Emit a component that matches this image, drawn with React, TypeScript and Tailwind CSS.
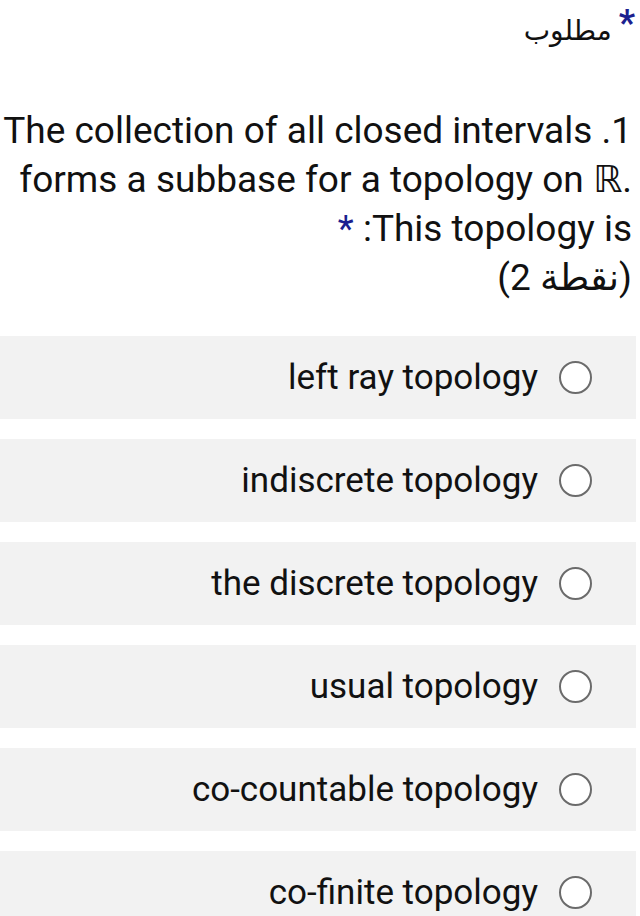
import { Fragment } from "react";

const options = [
  "left ray topology",
  "indiscrete topology",
  "the discrete topology",
  "usual topology",
  "co-countable topology",
  "co-finite topology",
];

function Radio() {
  return (
    <span className="block h-[33px] w-[33px] shrink-0 rounded-full border-2 border-[#6b6b6b] bg-white" />
  );
}

export default function App() {
  return (
    <div
      className="h-[916px] w-[640px] overflow-hidden bg-white text-[#111]"
      style={{ fontFamily: "Roboto, 'DejaVu Sans', sans-serif" }}
    >
      {/* Required marker */}
      <div dir="rtl" className="flex h-[56px] items-start pr-[5px] pt-[8px]">
        <span className="text-[28px] leading-[40px]">
          <span className="relative top-[-5px] text-[36px] font-bold text-[#1b1f8f]">*</span>{" "}
          مطلوب
        </span>
      </div>

      {/* Question */}
      <div className="mt-[50px] flex flex-col items-end whitespace-nowrap pr-[8px] text-[37px] leading-[49px]">
        <div dir="rtl">1. The collection of all closed intervals</div>
        <div dir="ltr">forms a subbase for a topology on ℝ.</div>
        <div dir="rtl">
          This topology is: <span className="text-[#1b1f8f]">*</span>
        </div>
        <div dir="ltr">(2 نقطة)</div>
      </div>

      {/* Options */}
      <div className="mt-[34px] flex flex-col gap-[20px] pr-[4px]">
        {options.map((o) => (
          <Fragment key={o}>
            <div
              dir="rtl"
              className="flex h-[83px] shrink-0 items-center gap-[21px] bg-[#f2f2f2] pr-[44px]"
            >
              <Radio />
              <span className="whitespace-nowrap text-[35px] leading-none">{o}</span>
            </div>
          </Fragment>
        ))}
      </div>
    </div>
  );
}
